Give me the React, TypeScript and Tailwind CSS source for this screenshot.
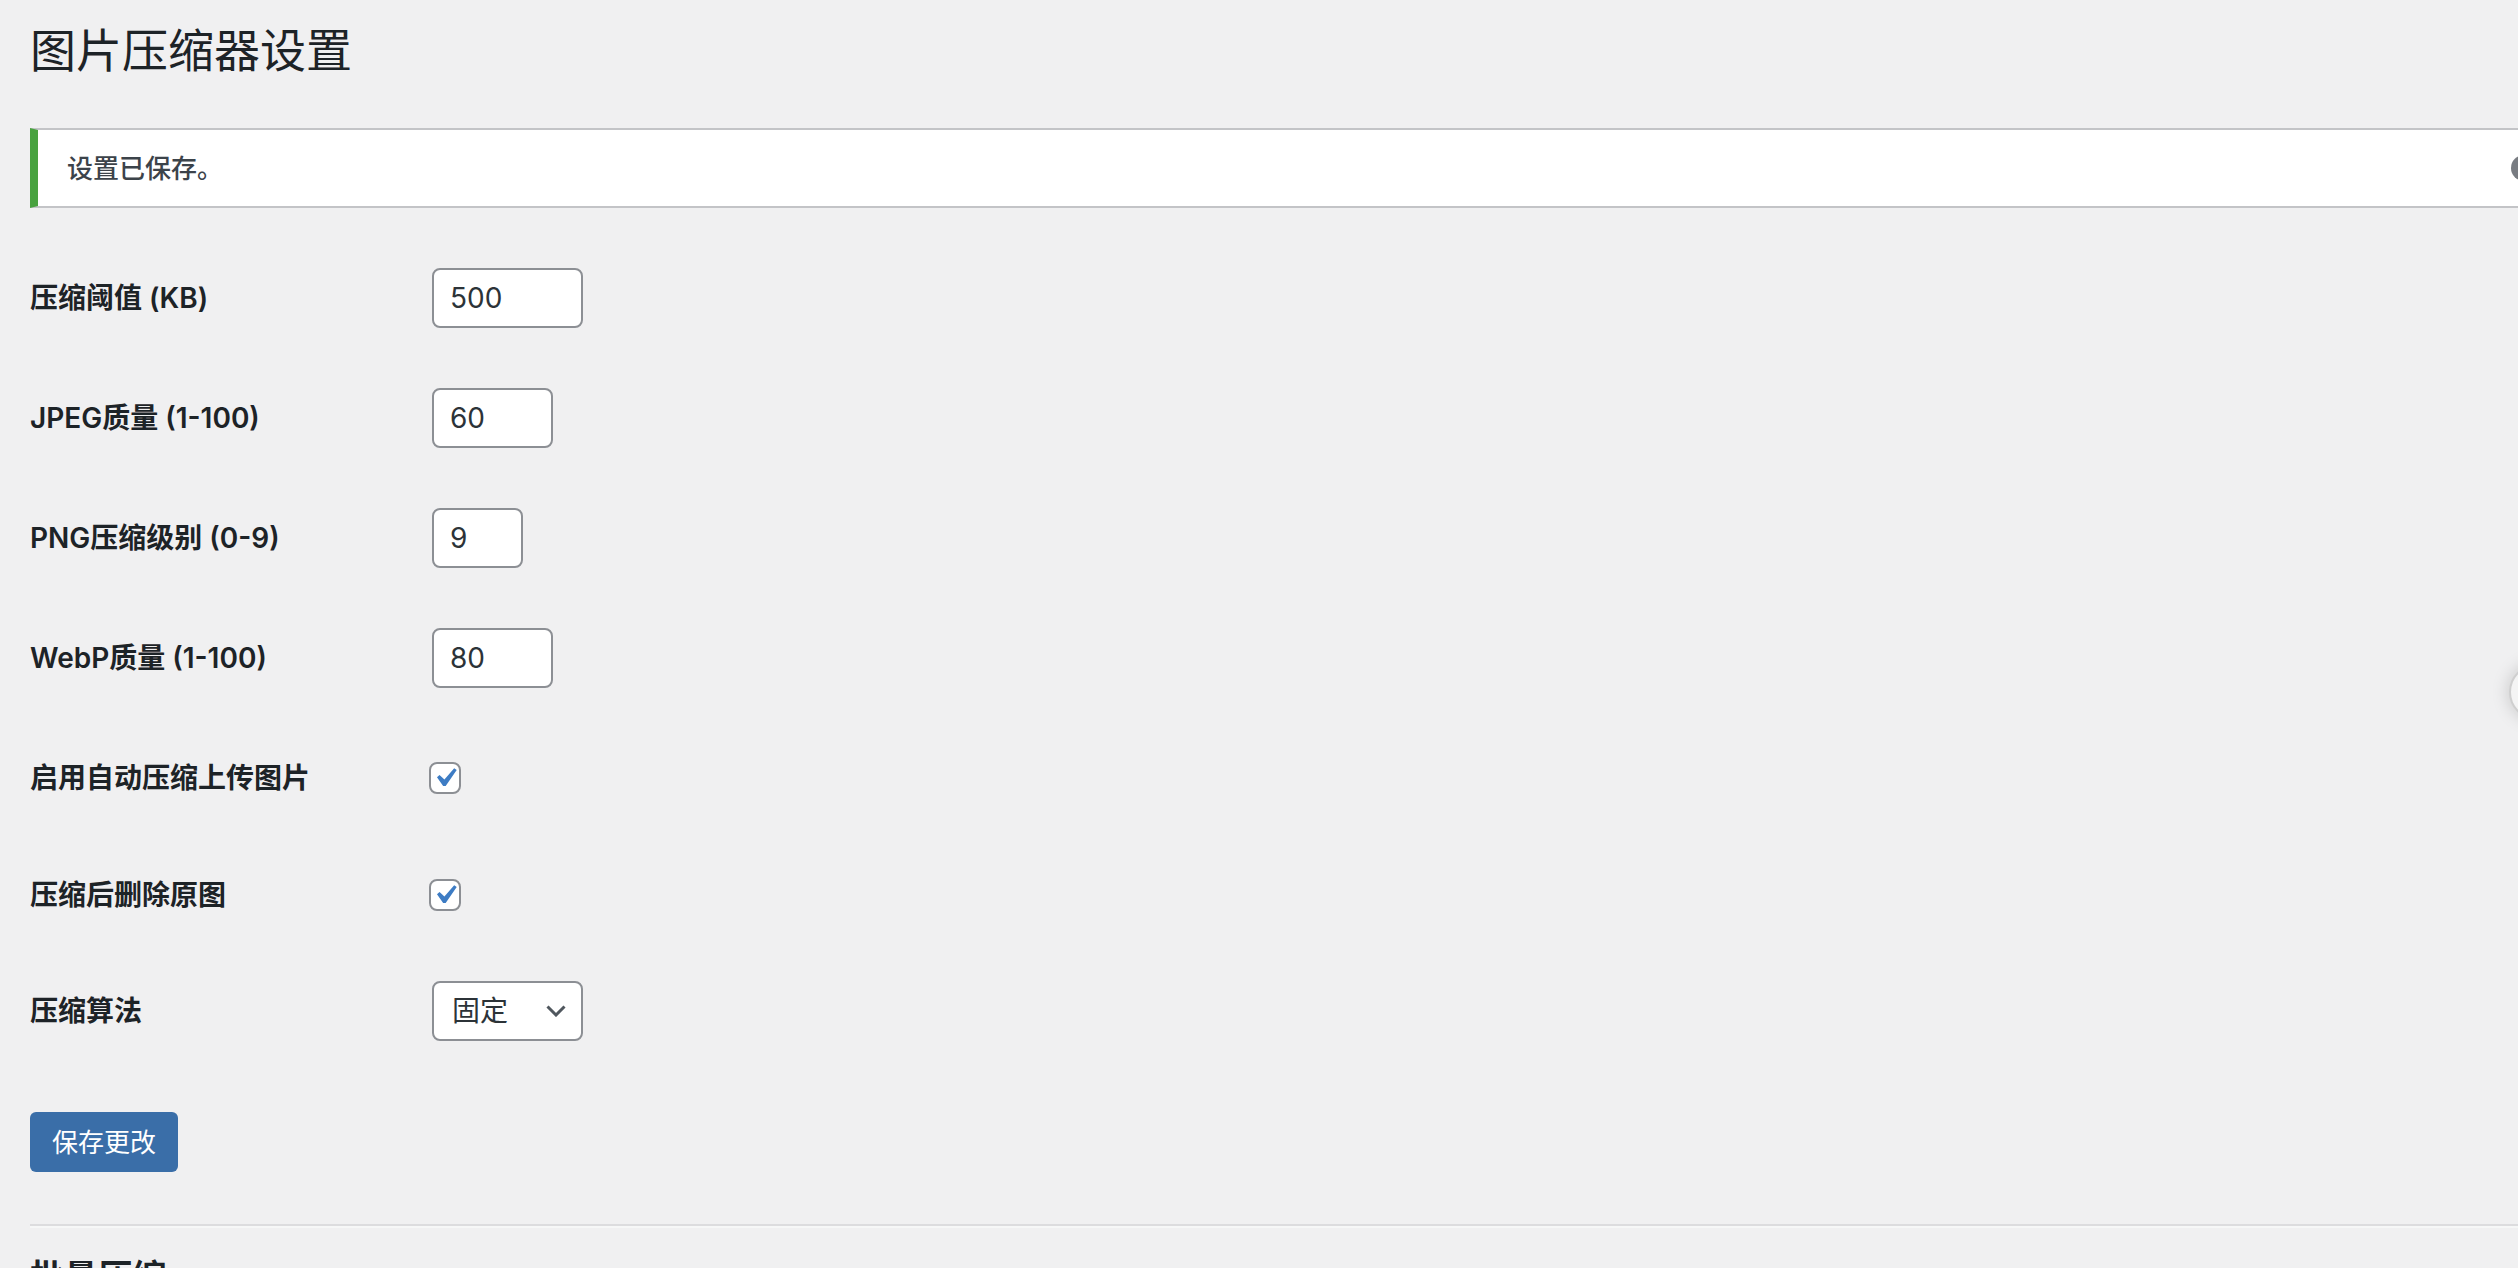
import React from "react";

const font = "font-[Inter,'Noto_Sans_CJK_SC',sans-serif]";

const Row = ({
  label,
  h,
  children,
}: {
  label: string;
  h: string;
  children: React.ReactNode;
}) => (
  <div className={`flex items-center ${h}`}>
    <div className="w-[402px] shrink-0 text-[28px] font-semibold leading-[40px] text-[#1d2327]">
      {label}
    </div>
    <div className="flex items-center">{children}</div>
  </div>
);

const NumberBox = ({ value, w }: { value: string; w: string }) => (
  <div
    className={`${w} flex h-[60px] items-center rounded-[8px] border-2 border-[#8c8f94] bg-white pl-[16px] text-[28px] text-[#2c3338]`}
  >
    {value}
  </div>
);

const Checkbox = () => (
  <div className="-ml-[3px] flex h-[32px] w-[32px] items-center justify-center rounded-[8px] border-2 border-[#8c8f94] bg-white">
    <svg width="38" height="38" viewBox="0 0 20 20" className="shrink-0 overflow-visible">
      <path
        d="M14.83 4.89l1.34.94-5.81 8.38H9.02L5.78 9.67l1.34-1.25 2.57 2.4z"
        fill="#3d7cc4"
      />
    </svg>
  </div>
);

const App = () => {
  return (
    <div className={`relative min-h-screen w-full overflow-hidden bg-[#f0f0f1] ${font}`}>
      <div className="w-[2590px] pl-[30px]">
        <h1 className="pt-[20px] text-[46px] font-normal leading-[60px] text-[#1d2327]">
          图片压缩器设置
        </h1>

        <div className="relative mt-[48px] flex h-[80px] items-center border-y-2 border-l-[8px] border-y-[#c3c4c7] border-l-[#48a23f] bg-white pl-[29px]">
          <span className="text-[26px] font-medium text-[#3c434a]">设置已保存。</span>
          {/* dismiss button, mostly off-screen */}
          <svg
            width="26"
            height="26"
            viewBox="0 0 26 26"
            className="absolute left-[2473px] top-[25px]"
          >
            <circle cx="13" cy="13" r="13" fill="#787c82" />
            <path d="M8.5 8.5l9 9M17.5 8.5l-9 9" stroke="#fff" strokeWidth="2.6" />
          </svg>
        </div>

        <div className="mt-[30px] flex flex-col">
          <Row label="压缩阈值 (KB)" h="h-[120px]">
            <NumberBox value="500" w="w-[151px]" />
          </Row>
          <Row label="JPEG质量 (1-100)" h="h-[120px]">
            <NumberBox value="60" w="w-[121px]" />
          </Row>
          <Row label="PNG压缩级别 (0-9)" h="h-[120px]">
            <NumberBox value="9" w="w-[91px]" />
          </Row>
          <Row label="WebP质量 (1-100)" h="h-[120px]">
            <NumberBox value="80" w="w-[121px]" />
          </Row>
          <Row label="启用自动压缩上传图片" h="h-[120px]">
            <Checkbox />
          </Row>
          <Row label="压缩后删除原图" h="h-[114px]">
            <Checkbox />
          </Row>
          <Row label="压缩算法" h="h-[118px]">
            <div className="flex h-[60px] w-[151px] items-center justify-between rounded-[8px] border-2 border-[#8c8f94] bg-white pl-[18px] pr-[15px] text-[28px] text-[#2c3338]">
              <span>固定</span>
              <svg width="20" height="12" viewBox="0 0 20 12">
                <polyline
                  points="1.5,1.5 10,10 18.5,1.5"
                  fill="none"
                  stroke="#50575e"
                  strokeWidth="3"
                />
              </svg>
            </div>
          </Row>
        </div>

        <button className="mt-[42px] flex h-[60px] w-[148px] items-center justify-center rounded-[6px] bg-[#3a6ea8] text-[26px] text-white">
          保存更改
        </button>

        <div className="mt-[52px] border-t-2 border-b-2 border-t-[#dcdcde] border-b-[#f6f7f7]" />

        <h2 className="mt-[27px] text-[34px] font-semibold leading-[44px] text-[#1d2327]">
          批量压缩
        </h2>
      </div>

      <div className="absolute left-[2509px] top-[664px] h-[56px] w-[56px] rounded-full border-2 border-[#cfcfcf] bg-[#f4f4f4] shadow-[0_0_18px_rgba(0,0,0,0.18)]" />
    </div>
  );
};

export default App;
